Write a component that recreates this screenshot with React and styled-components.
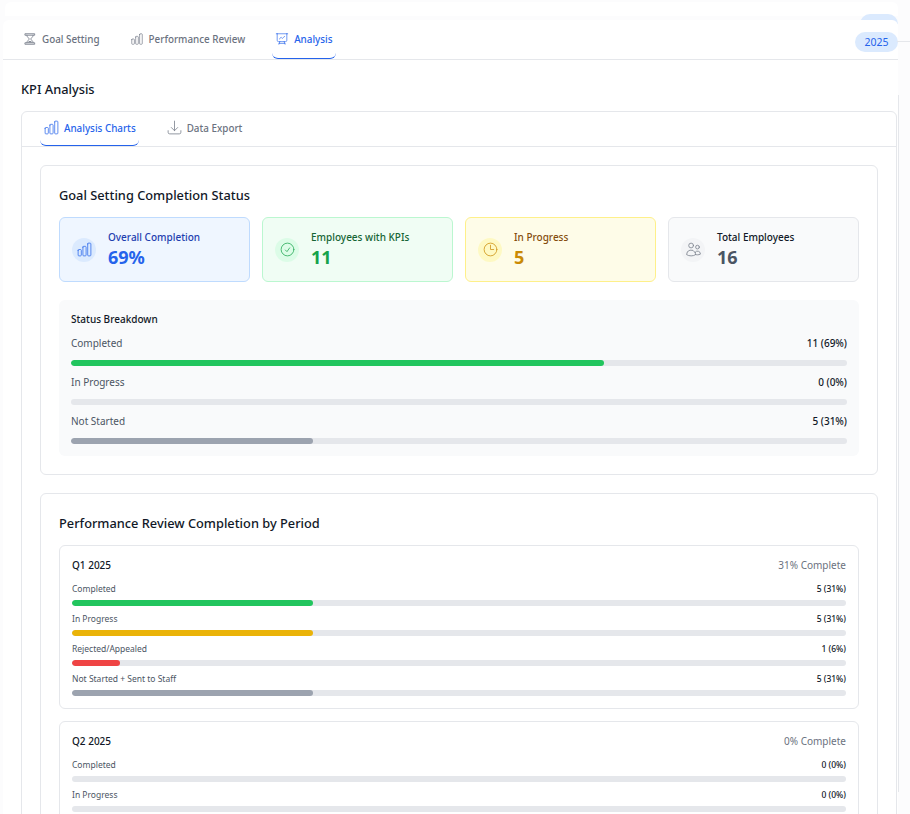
import styled, { createGlobalStyle } from "styled-components";
import {
  HiOutlineArrowDownTray,
  HiOutlineChartBar,
  HiOutlineCheckCircle,
  HiOutlineClock,
  HiOutlinePresentationChartLine,
  HiOutlineUsers,
} from "react-icons/hi2";

const GlobalStyle = createGlobalStyle`
  html, body {
    margin: 0;
    height: 814px;
    overflow: hidden;
    background: #fcfcfd;
    font-family: "Noto Sans", "Open Sans", sans-serif;
    color: #111827;
  }
  * { box-sizing: border-box; }
`;

const tones = {
  blue: { bg: "#eff6ff", border: "#bfdbfe", circle: "#dbeafe", icon: "#2563eb", label: "#1e40af", value: "#2563eb" },
  green: { bg: "#f0fdf4", border: "#bbf7d0", circle: "#dcfce7", icon: "#16a34a", label: "#166534", value: "#16a34a" },
  yellow: { bg: "#fefce8", border: "#fef08a", circle: "#fef9c3", icon: "#ca8a04", label: "#854d0e", value: "#ca8a04" },
  gray: { bg: "#f9fafb", border: "#e5e7eb", circle: "#f3f4f6", icon: "#6b7280", label: "#111827", value: "#4b5563" },
};

const barColors = {
  green: "#22c55e",
  yellow: "#eab308",
  red: "#ef4444",
  gray: "#9ca3af",
};

const Page = styled.div`
  position: relative;
  width: 910px;
  height: 814px;
  overflow: hidden;
  padding: 2px 0 0 3px;
`;

const TopStrip = styled.div`
  height: 14px;
  margin: 0 12px 4px 2px;
  background: #fff;
  border-radius: 6px 6px 0 0;
`;

const GhostPill = styled.div`
  position: absolute;
  top: 14px;
  left: 860px;
  width: 38px;
  height: 10px;
  background: #dbeafe;
  border-radius: 10px 10px 0 0;
`;

const Main = styled.main`
  position: relative;
  width: 895px;
  background: #fff;
  border-radius: 6px 6px 0 0;
`;

const Tab = styled.div`
  display: flex;
  align-items: center;
  height: 100%;
  padding: 0 3px;
  font-size: 9.85px;
  font-weight: 500;
  white-space: nowrap;
  color: ${(p) => (p.$active ? "#2563eb" : "#6b7280")};
  border-bottom: 1px solid ${(p) => (p.$active ? "#2563eb" : "transparent")};
  border-radius: 0 0 6px 6px;
  svg { flex: none; opacity: 0.85; }
`;

const MainTab = styled(Tab)`
  gap: 5px;
  padding-bottom: 1px;
`;

const ShellTab = styled(Tab)`
  gap: 4px;
  padding-bottom: 2px;
`;

const MainTabs = styled.nav`
  display: flex;
  height: 40px;
  padding-left: 17px;
  gap: 24px;
  border-bottom: 1px solid #e5e7eb;
`;

const ShellTabs = styled.nav`
  display: flex;
  height: 35px;
  padding-left: 18px;
  gap: 24px;
  border-bottom: 1px solid #e5e7eb;
`;

const YearPill = styled.div`
  position: absolute;
  top: 12px;
  left: 852px;
  width: 43px;
  height: 20px;
  display: flex;
  align-items: center;
  justify-content: center;
  background: #dbeafe;
  color: #2563eb;
  font-size: 10.5px;
  border-radius: 10px;
`;

const PillLine = styled.div`
  position: absolute;
  top: 41px;
  left: 897px;
  width: 13px;
  height: 1px;
  background: #e5e7eb;
`;

const EdgeLine = styled.div`
  position: absolute;
  top: 95px;
  left: 898px;
  width: 1px;
  height: 697px;
  background: #e5e7eb;
`;

const Content = styled.div`
  padding: 20px 1px 0 18px;
`;

const PageTitle = styled.h1`
  margin: 0 0 12px;
  font-size: 12.8px;
  line-height: 19px;
  font-weight: 500;
  color: #111827;
`;

const Shell = styled.section`
  width: 876px;
  border: 1px solid #e5e7eb;
  border-radius: 6px 6px 0 0;
`;

const ShellBody = styled.div`
  display: flex;
  flex-direction: column;
  gap: 18px;
  padding: 18px 18px 0;
`;

const Card = styled.section`
  padding: 20px 18px 18px;
  border: 1px solid #e5e7eb;
  border-radius: 6px;
`;

const CardTitle = styled.h2`
  margin: 0 0 13px;
  font-size: 12.8px;
  line-height: 18px;
  font-weight: 500;
  color: #111827;
`;

const StatGrid = styled.div`
  display: grid;
  grid-template-columns: repeat(4, 191px);
  gap: 12px;
  margin-bottom: 18px;
`;

const Stat = styled.div`
  display: flex;
  align-items: center;
  gap: 12px;
  height: 65px;
  padding: 0 12px;
  background: ${(p) => tones[p.$tone].bg};
  border: 1px solid ${(p) => tones[p.$tone].border};
  border-radius: 6px;
`;

const StatCircle = styled.div`
  display: flex;
  align-items: center;
  justify-content: center;
  width: 24px;
  height: 24px;
  flex: none;
  border-radius: 50%;
  background: ${(p) => tones[p.$tone].circle};
  color: ${(p) => tones[p.$tone].icon};
  svg { opacity: 0.85; }
`;

const StatLabel = styled.div`
  margin-bottom: 1px;
  font-size: 10px;
  line-height: 14px;
  font-weight: 500;
  color: ${(p) => tones[p.$tone].label};
`;

const StatValue = styled.div`
  font-size: 18px;
  line-height: 24px;
  font-weight: 700;
  color: ${(p) => tones[p.$tone].value};
`;

const Breakdown = styled.div`
  padding: 12px;
  background: #f9fafb;
  border-radius: 6px;
`;

const SubTitle = styled.h3`
  margin: 0 0 10px;
  font-size: 10px;
  line-height: 14px;
  font-weight: 500;
  color: #111827;
`;

const BarRow = styled.div`
  margin-top: ${(p) => p.$gap}px;
`;

const BarHead = styled.div`
  display: flex;
  justify-content: space-between;
  align-items: center;
  height: 14px;
  margin-bottom: ${(p) => p.$gap}px;
`;

const BarLabel = styled.span`
  font-size: ${(p) => p.$size}px;
  color: #4b5563;
`;

const BarCount = styled.span`
  font-size: ${(p) => p.$size}px;
  font-weight: 500;
  color: #111827;
`;

const Track = styled.div`
  height: 6px;
  background: #e5e7eb;
  border-radius: 3px;
  overflow: hidden;
`;

const Fill = styled.div`
  height: 100%;
  background: ${(p) => barColors[p.$color]};
  border-radius: 3px;
`;

const PeriodList = styled.div`
  display: flex;
  flex-direction: column;
  gap: 12px;
`;

const Period = styled.div`
  padding: 12px;
  border: 1px solid #e5e7eb;
  border-radius: 6px;
`;

const PeriodHead = styled.div`
  display: flex;
  justify-content: space-between;
  align-items: center;
  height: 14px;
  margin-bottom: 9px;
`;

const PeriodName = styled.span`
  font-size: 10px;
  font-weight: 500;
  color: #111827;
`;

const PeriodDone = styled.span`
  font-size: 10px;
  color: #6b7280;
`;

function HourglassIcon() {
  return (
    <svg width="14" height="14" viewBox="0 0 24 24" fill="none" stroke="currentColor" strokeWidth="1.6" strokeLinecap="round" strokeLinejoin="round">
      <path d="M4 3h16v2.5H4zM4 18.5h16V21H4z" />
      <path d="M6.5 5.5c0 3.5 4 4.5 4 6.5s-4 3-4 6.5M17.5 5.5c0 3.5-4 4.5-4 6.5s4 3 4 6.5" />
      <path d="M8 18c.9-1.7 2.8-2.6 4-2.6s3.1.9 4 2.6z" fill="currentColor" stroke="none" />
    </svg>
  );
}

const statCards = [
  { tone: "blue", Icon: HiOutlineChartBar, label: "Overall Completion", value: "69%" },
  { tone: "green", Icon: HiOutlineCheckCircle, label: "Employees with KPIs", value: "11" },
  { tone: "yellow", Icon: HiOutlineClock, label: "In Progress", value: "5" },
  { tone: "gray", Icon: HiOutlineUsers, label: "Total Employees", value: "16" },
];

const breakdown = [
  { label: "Completed", count: "11 (69%)", pct: 68.7, color: "green" },
  { label: "In Progress", count: "0 (0%)", pct: 0, color: "yellow" },
  { label: "Not Started", count: "5 (31%)", pct: 31.2, color: "gray" },
];

const periods = [
  {
    name: "Q1 2025",
    done: "31% Complete",
    rows: [
      { label: "Completed", count: "5 (31%)", pct: 31.2, color: "green" },
      { label: "In Progress", count: "5 (31%)", pct: 31.2, color: "yellow" },
      { label: "Rejected/Appealed", count: "1 (6%)", pct: 6.25, color: "red" },
      { label: "Not Started + Sent to Staff", count: "5 (31%)", pct: 31.2, color: "gray" },
    ],
  },
  {
    name: "Q2 2025",
    done: "0% Complete",
    rows: [
      { label: "Completed", count: "0 (0%)", pct: 0, color: "green" },
      { label: "In Progress", count: "0 (0%)", pct: 0, color: "yellow" },
    ],
  },
];

function Bar({ row, size, headGap, gap }) {
  return (
    <BarRow $gap={gap}>
      <BarHead $gap={headGap}>
        <BarLabel $size={size}>{row.label}</BarLabel>
        <BarCount $size={size}>{row.count}</BarCount>
      </BarHead>
      <Track>
        <Fill $color={row.color} style={{ width: `${row.pct}%` }} />
      </Track>
    </BarRow>
  );
}

export default function App() {
  return (
    <>
      <GlobalStyle />
      <Page>
        <TopStrip />
        <GhostPill />
        <Main>
          <MainTabs>
            <MainTab>
              <HourglassIcon />
              Goal Setting
            </MainTab>
            <MainTab>
              <HiOutlineChartBar size={14} strokeWidth={1.3} />
              Performance Review
            </MainTab>
            <MainTab $active>
              <HiOutlinePresentationChartLine size={14} strokeWidth={1.3} />
              Analysis
            </MainTab>
          </MainTabs>
          <Content>
            <PageTitle>KPI Analysis</PageTitle>
            <Shell>
              <ShellTabs>
                <ShellTab $active>
                  <HiOutlineChartBar size={17} strokeWidth={1.2} />
                  Analysis Charts
                </ShellTab>
                <ShellTab>
                  <HiOutlineArrowDownTray size={17} strokeWidth={1.2} />
                  Data Export
                </ShellTab>
              </ShellTabs>
              <ShellBody>
                <Card>
                  <CardTitle>Goal Setting Completion Status</CardTitle>
                  <StatGrid>
                    {statCards.map(({ tone, Icon, label, value }) => (
                      <Stat key={label} $tone={tone}>
                        <StatCircle $tone={tone}>
                          <Icon size={17} strokeWidth={1.2} />
                        </StatCircle>
                        <div>
                          <StatLabel $tone={tone}>{label}</StatLabel>
                          <StatValue $tone={tone}>{value}</StatValue>
                        </div>
                      </Stat>
                    ))}
                  </StatGrid>
                  <Breakdown>
                    <SubTitle>Status Breakdown</SubTitle>
                    {breakdown.map((row, i) => (
                      <Bar key={row.label} row={row} size={10} headGap={10} gap={i ? 9 : 0} />
                    ))}
                  </Breakdown>
                </Card>
                <Card>
                  <CardTitle>Performance Review Completion by Period</CardTitle>
                  <PeriodList>
                    {periods.map((period) => (
                      <Period key={period.name}>
                        <PeriodHead>
                          <PeriodName>{period.name}</PeriodName>
                          <PeriodDone>{period.done}</PeriodDone>
                        </PeriodHead>
                        {period.rows.map((row, i) => (
                          <Bar key={row.label} row={row} size={8.5} headGap={5} gap={i ? 5 : 0} />
                        ))}
                      </Period>
                    ))}
                  </PeriodList>
                </Card>
              </ShellBody>
            </Shell>
          </Content>
          <YearPill>2025</YearPill>
        </Main>
        <PillLine />
        <EdgeLine />
      </Page>
    </>
  );
}
